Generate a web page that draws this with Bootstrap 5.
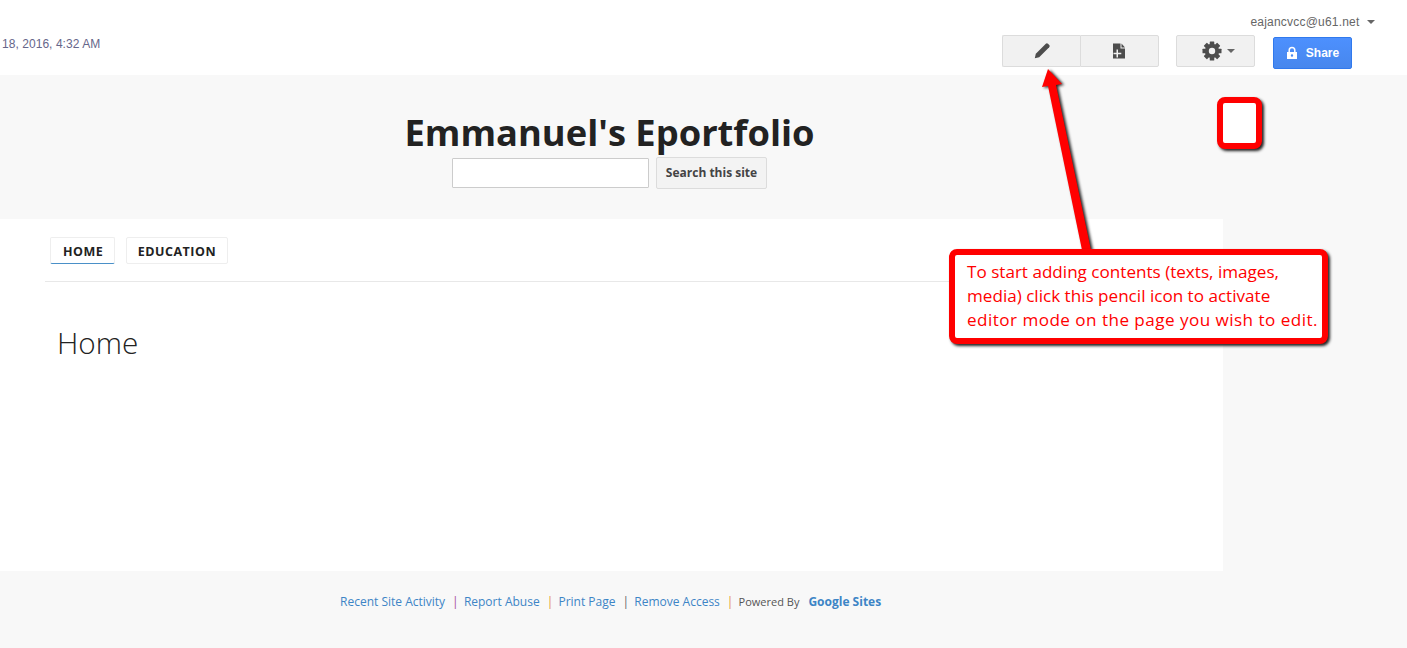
<!DOCTYPE html>
<html lang="en">

<head>
    <meta charset="UTF-8">
    <meta name="viewport" content="width=device-width, initial-scale=1.0">
    <title>Emmanuel's Eportfolio</title>

    <link href="https://cdn.jsdelivr.net/npm/bootstrap@5.3.0/dist/css/bootstrap.min.css" rel="stylesheet">

    <style>
        body {
            background-color: #f8f8f8;
            font-family: "Open Sans", sans-serif;
            color: #222;
            height: 648px;
            overflow: hidden;
            position: relative;
        }

        .top-bar {
            height: 75px;
            background-color: #fff;
        }

        .last-edit {
            font: 12px "Liberation Sans", sans-serif;
            color: #66668a;
            padding: 37px 0 0 2px;
            letter-spacing: .05px;
        }

        .top-right {
            width: 405px;
            padding-right: 32px;
        }

        .user-mail {
            font: 12px/14px "Liberation Sans", sans-serif;
            color: #666;
            padding-top: 15px;
            height: 35px;
            letter-spacing: .2px;
        }

        .caret-down {
            display: inline-block;
            border-left: 4.5px solid transparent;
            border-right: 4.5px solid transparent;
            border-top: 4.5px solid #666;
            vertical-align: 2px;
        }

        .tool-btn {
            width: 79px;
            height: 32px;
            background-color: #f1f1f1;
            border: 1px solid #dcdcdc;
            border-radius: 2px;
        }

        .gear-btn {
            padding-left: 7px;
            gap: 5px;
        }

        .doc-icon {
            margin-right: 2px;
        }

        .tool-group .tool-btn:first-child {
            width: 78px;
            border-right: 0;
            border-radius: 2px 0 0 2px;
        }

        .tool-group .tool-btn:last-child {
            border-radius: 0 2px 2px 0;
        }

        .share-btn {
            width: 79px;
            height: 32px;
            margin: 2px 0 0 18px;
            background: linear-gradient(#4d90fe, #4787ed);
            border: 1px solid #3079ed;
            border-radius: 2px;
            color: #fff;
            font: bold 12px "Liberation Sans", sans-serif;
        }

        .site-head {
            width: 1219px;
            height: 144px;
            padding-top: 33px;
            text-align: center;
        }

        .site-title {
            font-size: 36.3px;
            font-weight: 700;
            line-height: 49px;
            margin: 0;
            color: #222;
        }

        .search-box {
            width: 197px;
            height: 30px;
            background-color: #fff;
            border: 1px solid #ccc;
            border-radius: 1px;
        }

        .search-btn {
            height: 32px;
            width: 111px;
            margin-left: 7px;
            background-color: #f3f3f3;
            border: 1px solid #dcdcdc;
            border-radius: 2px;
            font-size: 12px;
            font-weight: 700;
            color: #444;
            padding: 0;
        }

        .page-body {
            width: 1223px;
            height: 352px;
            background-color: #fff;
            padding: 18px 0 0 45px;
        }

        .page-nav {
            height: 45px;
            border-bottom: 1px solid #e8e8e8;
            padding-left: 5px;
        }

        .nav-tab {
            height: 27px;
            padding: 0 10.5px;
            border: 1px solid #eee;
            border-radius: 2px;
            font-size: 12.5px;
            font-weight: 700;
            line-height: 27px;
            letter-spacing: .5px;
            color: #222;
            margin-right: 11px;
        }

        .nav-tab.selected {
            padding: 0 11px 0 12px;
            border-bottom: 1px solid #4a90c8;
        }

        .page-title {
            font-size: 29.7px;
            font-weight: 300;
            line-height: 40px;
            margin: 41px 0 0 12px;
        }

        .site-foot {
            font-size: 12px;
            padding: 22px 0 0 340px;
            color: #555;
        }

        .site-foot a {
            color: #3d85c6;
            text-decoration: none;
        }

        .sep-a { color: #a64d9c; margin: 0 5.2px 0 7px; }
        .sep-b { color: #e69138; margin: 0 5.2px 0 7px; }
        .sep-c { color: #666; margin: 0 5.2px 0 7px; }

        .powered-by {
            font-size: 11px;
            margin-right: 9px;
        }

        .note-arrow {
            position: absolute;
            left: 1030px;
            top: 60px;
            filter: drop-shadow(2px 1px 1.5px #222);
        }

        .note-square {
            position: absolute;
            left: 1217px;
            top: 97px;
            width: 45px;
            height: 52px;
            background-color: #fff;
            border: 6px solid #f00;
            border-radius: 8px;
            box-shadow: 2px 2px 3px #222;
        }

        .note-box {
            position: absolute;
            left: 949px;
            top: 249px;
            width: 379px;
            height: 95px;
            background-color: #fff;
            border: 6px solid #f00;
            border-radius: 8px;
            box-shadow: 2px 2px 3px #222;
            color: #f00;
            font-size: 17.1px;
            line-height: 24px;
            padding: 5px 0 0 12px;
        }

        .note-last {
            display: block;
            letter-spacing: .46px;
        }
    </style>
</head>

<body>
    <div class="top-bar d-flex justify-content-between">
        <div class="last-edit">18, 2016, 4:32 AM</div>
        <div class="top-right">
            <div class="user-mail text-end">eajancvcc@u61.net <span class="caret-down ms-1"></span></div>
            <div class="d-flex justify-content-between" style="width:350px">
                <div class="tool-group d-flex">
                    <div class="tool-btn d-flex align-items-center justify-content-center">
                        <svg width="16" height="16" viewBox="0 0 16 16">
                            <path fill="#4d4d4d" d="M11.800.8a1.600 1.600 0 0 1 2.200 0l1.200 1.200a1.600 1.600 0 0 1 0 2.200L5.200 14.200.8 15.200l1-4.400z" />
                        </svg>
                    </div>
                    <div class="tool-btn d-flex align-items-center justify-content-center">
                        <svg class="doc-icon" width="14" height="16" viewBox="0 0 14 16">
                            <path fill="#4d4d4d" d="M1 .5h7.500V5.500H13V15.500H1z" />
                            <path fill="#4d4d4d" d="M9.500.5L13 4.500H9.500z" />
                            <path fill="#f1f1f1" d="M4.500 6.500h1.500v3.300h3.300v1.400H6v3.300H4.500v-3.300H1.500V9.800h3z" />
                        </svg>
                    </div>
                </div>
                <div class="tool-btn gear-btn d-flex align-items-center justify-content-center ms-3">
                    <svg width="20" height="20" viewBox="0 0 20 20">
                        <g fill="#4d4d4d">
                            <rect x="7.750" y=".5" width="4.500" height="19" rx=".5" />
                            <rect x="7.750" y=".5" width="4.500" height="19" rx=".5" transform="rotate(45 10 10)" />
                            <rect x="7.750" y=".5" width="4.500" height="19" rx=".5" transform="rotate(90 10 10)" />
                            <rect x="7.750" y=".5" width="4.500" height="19" rx=".5" transform="rotate(135 10 10)" />
                        </g>
                        <circle cx="10" cy="10" r="5.200" fill="#f1f1f1" stroke="#4d4d4d" stroke-width="4" />
                    </svg>
                    <span class="caret-down"></span>
                </div>
                <div class="share-btn d-flex align-items-center justify-content-center gap-2">
                    <svg width="12" height="14" viewBox="0 0 12 14">
                        <path fill="none" stroke="#fff" stroke-width="1.500" d="M3.200 6.500V4.200a2.800 2.800 0 0 1 5.600 0v2.300" />
                        <path fill="#fff" fill-rule="evenodd" d="M1 6h10v7H1zM6 8.300a1.200 1.200 0 1 0 0 2.400 1.200 1.200 0 0 0 0-2.400z" />
                    </svg>
                    <span>Share</span>
                </div>
            </div>
        </div>
    </div>

    <div class="site-head">
        <h1 class="site-title">Emmanuel's Eportfolio</h1>
        <div class="d-flex justify-content-center align-items-center">
            <div class="search-box"></div>
            <button class="search-btn" type="button">Search this site</button>
        </div>
    </div>

    <div class="page-body">
        <div class="page-nav d-flex align-items-start">
            <div class="nav-tab selected">HOME</div>
            <div class="nav-tab">EDUCATION</div>
        </div>
        <h2 class="page-title">Home</h2>
    </div>

    <div class="site-foot">
        <a href="#">Recent Site Activity</a><span class="sep-a">|</span><a href="#">Report Abuse</a><span class="sep-b">|</span><a href="#">Print Page</a><span class="sep-c">|</span><a href="#">Remove Access</a><span class="sep-b">|</span><span class="powered-by">Powered By</span><a href="#" class="fw-bold">Google Sites</a>
    </div>

    <!-- Anotaciones encima de la captura -->
    <svg class="note-arrow" width="80" height="195" viewBox="0 0 80 195">
        <path fill="#f00" d="M18 9L12 27l6-1L52 190h9L26 25l6-1z" />
    </svg>
    <div class="note-square"></div>
    <div class="note-box">To start adding contents (texts, images, media) click this pencil icon to activate <span class="note-last">editor mode on the page you wish to edit.</span></div>

    <script src="https://cdn.jsdelivr.net/npm/bootstrap@5.3.0/dist/js/bootstrap.bundle.min.js"></script>
</body>

</html>
